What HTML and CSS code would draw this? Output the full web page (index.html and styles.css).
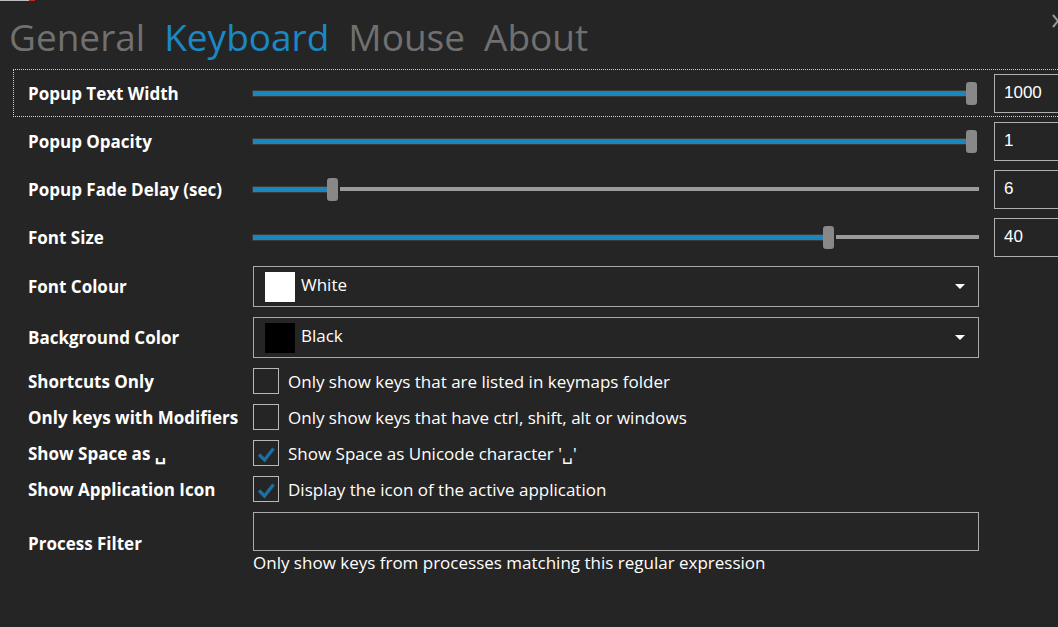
FILE: index.html
```html
<!DOCTYPE html>
<html>
<head>
<meta charset="utf-8">
<link rel="stylesheet" href="styles.css">
</head>
<body>
<div class="window">
  <div class="edge"><span class="edge-light"></span><span class="edge-red"></span></div>
  <svg class="close" viewBox="0 0 12 14" width="12" height="14"><path d="M1 1 L11 13 M11 1 L1 13"/></svg>
  <nav class="tabs">
    <span class="tab">General</span>
    <span class="tab active">Keyboard</span>
    <span class="tab">Mouse</span>
    <span class="tab">About</span>
  </nav>
  <div class="form">
    <div class="row slider-row focused">
      <span class="label">Popup Text Width</span>
      <div class="slider"><div class="fill" style="width:713px"></div><div class="thumb"></div><div class="rest"></div></div>
      <div class="num">1000</div>
    </div>
    <div class="row slider-row">
      <span class="label">Popup Opacity</span>
      <div class="slider"><div class="fill" style="width:713px"></div><div class="thumb"></div><div class="rest"></div></div>
      <div class="num">1</div>
    </div>
    <div class="row slider-row">
      <span class="label">Popup Fade Delay (sec)</span>
      <div class="slider"><div class="fill" style="width:74px"></div><div class="thumb"></div><div class="rest"></div></div>
      <div class="num">6</div>
    </div>
    <div class="row slider-row">
      <span class="label">Font Size</span>
      <div class="slider"><div class="fill" style="width:570px"></div><div class="thumb"></div><div class="rest"></div></div>
      <div class="num">40</div>
    </div>
    <div class="row combo-row">
      <span class="label">Font Colour</span>
      <div class="combo"><span class="swatch swatch-white"></span><span class="combo-text">White</span><span class="arrow"></span></div>
    </div>
    <div class="row combo-row">
      <span class="label">Background Color</span>
      <div class="combo"><span class="swatch swatch-black"></span><span class="combo-text">Black</span><span class="arrow"></span></div>
    </div>
    <div class="row check-row">
      <span class="label">Shortcuts Only</span>
      <div class="check"><span class="box"></span><span class="check-text">Only show keys that are listed in keymaps folder</span></div>
    </div>
    <div class="row check-row">
      <span class="label">Only keys with Modifiers</span>
      <div class="check"><span class="box"></span><span class="check-text">Only show keys that have ctrl, shift, alt or windows</span></div>
    </div>
    <div class="row check-row">
      <span class="label">Show Space as ␣</span>
      <div class="check"><span class="box"><svg viewBox="0 0 26 26" width="26" height="26"><path d="M6 14.5 L11.5 20 L20.5 8.5" class="tick"/></svg></span><span class="check-text">Show Space as Unicode character '␣'</span></div>
    </div>
    <div class="row check-row">
      <span class="label">Show Application Icon</span>
      <div class="check"><span class="box"><svg viewBox="0 0 26 26" width="26" height="26"><path d="M6 14.5 L11.5 20 L20.5 8.5" class="tick"/></svg></span><span class="check-text">Display the icon of the active application</span></div>
    </div>
    <div class="row filter-row">
      <span class="label">Process Filter</span>
      <div class="filter">
        <div class="text-input"></div>
        <div class="hint">Only show keys from processes matching this regular expression</div>
      </div>
    </div>
  </div>
</div>
</body>
</html>
```
FILE: styles.css
```css
html, body {
  margin: 0;
  padding: 0;
  background: #252525;
  overflow: hidden;
}
body {
  width: 1058px;
  height: 627px;
  font-family: "Open Sans", "Noto Sans", sans-serif;
  color: #ffffff;
}
.window {
  position: relative;
  width: 1058px;
  height: 627px;
  overflow: hidden;
}
.edge {
  position: absolute;
  left: 0;
  top: 0;
  display: flex;
  height: 1px;
}
.edge-light { width: 29px; background: #bdbdbd; }
.edge-red { width: 6px; background: #c4281c; }
.close {
  position: absolute;
  left: 1052px;
  top: 14px;
  overflow: visible;
}
.close path {
  stroke: #9a9a9a;
  stroke-width: 2;
  fill: none;
}
.tabs {
  display: flex;
  gap: 19px;
  padding: 12px 0 0 9px;
  height: 57px;
  box-sizing: content-box;
}
.tab {
  font-size: 37px;
  line-height: 50px;
  color: #707070;
}
.tab.active { color: #1b88c6; }

.form { width: 1100px; }
.row {
  display: grid;
  grid-template-columns: 210px 726px 80px;
  column-gap: 15px;
  align-items: center;
  margin-left: 13px;
  padding-left: 15px;
  width: 1087px;
  box-sizing: border-box;
}
.label {
  font-weight: 700;
  font-size: 17px;
  white-space: nowrap;
}
.slider-row { height: 48px; }
.focused {
  outline: 1px dotted #d0d0d0;
  outline-offset: -1px;
}
.slider {
  display: flex;
  align-items: center;
  height: 23px;
}
.fill {
  height: 5px;
  background: #1b86bb;
  box-shadow: 0 0 0 1px #3b3b3b;
}
.thumb {
  width: 11px;
  height: 23px;
  border-radius: 3px;
  background: #888888;
  flex: none;
}
.rest {
  flex: 1;
  height: 4px;
  margin-left: 2px;
  background: #9b9b9b;
}
.num {
  height: 39px;
  border: 1px solid #b0b0b0;
  box-sizing: border-box;
  padding-left: 9px;
  display: flex;
  align-items: center;
  font-family: "Liberation Sans", Arial, sans-serif;
  font-size: 17px;
}
.combo-row { height: 51px; }
.combo {
  grid-column: 2;
  height: 41px;
  border: 1px solid #aaaaaa;
  box-sizing: border-box;
  display: flex;
  align-items: center;
  padding-left: 11px;
  padding-right: 13px;
}
.swatch { width: 30px; height: 30px; flex: none; }
.swatch-white { background: #ffffff; }
.swatch-black { background: #000000; }
.combo-text {
  margin-left: 6px;
  font-size: 17px;
  flex: 1;
  margin-top: -4px;
}
.arrow {
  width: 0;
  height: 0;
  border-left: 5px solid transparent;
  border-right: 5px solid transparent;
  border-top: 5px solid #ffffff;
}
.check-row { height: 36px; }
.check {
  grid-column: 2 / span 2;
  display: flex;
  align-items: center;
  gap: 9px;
}
.box {
  width: 26px;
  height: 26px;
  border: 1px solid #b8b8b8;
  box-sizing: border-box;
  flex: none;
  display: flex;
  align-items: center;
  justify-content: center;
}
.box svg { display: block; flex: none; margin: -1px; }
.tick {
  fill: none;
  stroke: #1a6fa3;
  stroke-width: 3.4;
}
.check-text {
  font-size: 17px;
  white-space: nowrap;
}
.filter-row { height: 73px; }
.filter { grid-column: 2; align-self: start; padding-top: 5px; }
.text-input {
  height: 39px;
  border: 1px solid #aaaaaa;
  box-sizing: border-box;
}
.hint {
  font-size: 17px;
  line-height: 24px;
  white-space: nowrap;
}
```
